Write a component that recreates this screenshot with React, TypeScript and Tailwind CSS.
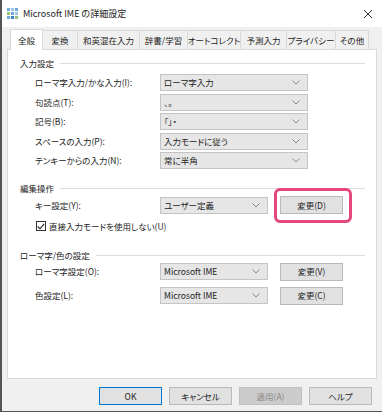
import { ReactNode } from "react";

const jp = "font-['Meiryo_UI','Noto_Sans_CJK_JP',sans-serif] [font-feature-settings:'palt']";

function Chevron() {
  return (
    <svg width="8" height="5" viewBox="0 0 8 5" className="shrink-0">
      <polyline points="0.5,0.5 4,4 7.5,0.5" fill="none" stroke="#8a8a8a" strokeWidth="1" />
    </svg>
  );
}

function Select({ value, w = "w-[148px]" }: { value: string; w?: string }) {
  return (
    <div className={`${w} h-[17px] flex items-center justify-between border border-[#c4c4c4] bg-[#e6e6e6] pl-[3px] pr-[7px] text-[8.5px] text-[#222]`}>
      <span className="whitespace-nowrap">{value}</span>
      <Chevron />
    </div>
  );
}

function Btn({ children, className = "" }: { children: ReactNode; className?: string }) {
  return (
    <div className={`w-[63px] h-[18px] flex items-center justify-center border border-[#b9b9b9] bg-[#e1e1e1] text-[8.5px] text-[#222] whitespace-nowrap ${className}`}>
      {children}
    </div>
  );
}

function Section({ title, children }: { title: string; children: ReactNode }) {
  return (
    <div className="flex flex-col">
      <div className="flex items-center h-[14px]">
        <span className="text-[8.5px] text-[#222] pr-[6px] whitespace-nowrap">{title}</span>
        <div className="flex-1 h-px bg-[#dcdcdc] mr-[11px]" />
      </div>
      {children}
    </div>
  );
}

function Row({ label, children }: { label: string; children: ReactNode }) {
  return (
    <div className="flex items-center">
      <div className="w-[140px] pl-[15px] text-[8.5px] text-[#222] whitespace-nowrap">{label}</div>
      {children}
    </div>
  );
}

const tabs = ["全般", "変換", "和英混在入力", "辞書/学習", "オートコレクト", "予測入力", "プライバシー", "その他"];
const tabW = [33, 35, 62, 48, 53, 46, 49, 33];

export default function App() {
  return (
    <div className={`w-[382px] h-[412px] overflow-hidden bg-[#f0f0f0] border-l-2 border-b border-[#555] flex flex-col ${jp}`}>
      {/* title bar */}
      <div className="h-[27px] bg-white flex items-center pl-[5px] pr-[9px] shrink-0">
        <svg width="12" height="11" viewBox="0 0 12 11">
          <rect x="0" y="0" width="3" height="3" fill="#6fa8dc" />
          <rect x="4" y="0" width="3" height="3" fill="#9fc5e8" />
          <rect x="8" y="0" width="3" height="3" fill="#6fa8dc" />
          <rect x="0" y="4" width="3" height="3" fill="#93c47d" />
          <rect x="4" y="4" width="3" height="3" fill="#6fa8dc" />
          <rect x="8" y="4" width="3" height="3" fill="#9fc5e8" />
          <rect x="0" y="8" width="3" height="3" fill="#6fa8dc" />
          <rect x="4" y="8" width="3" height="3" fill="#3d85c6" />
          <rect x="8" y="8" width="3" height="3" fill="#93c47d" />
        </svg>
        <span className="ml-[4px] text-[9px] text-[#222]">Microsoft IME の詳細設定</span>
        <svg width="10" height="10" viewBox="0 0 10 10" className="ml-auto">
          <path d="M1 1 L9 9 M9 1 L1 9" stroke="#333" strokeWidth="1" />
        </svg>
      </div>

      <div className="flex-1 flex flex-col px-[5px] pt-[2px]">
        {/* tabs */}
        <div className="flex items-end h-[20px] pl-[3px] relative z-10">
          {tabs.map((t, i) =>
            i === 0 ? (
              <div
                key={t}
                style={{ width: tabW[i] }}
                className="h-[21px] -mb-px bg-white border border-[#d9d9d9] border-b-0 flex items-center justify-center text-[8.5px] text-[#222] whitespace-nowrap"
              >
                {t}
              </div>
            ) : (
              <div
                key={t}
                style={{ width: tabW[i] }}
                className="h-[19px] bg-[#f0f0f0] border border-[#d9d9d9] border-l-0 border-b-0 flex items-center justify-center text-[8.5px] text-[#222] whitespace-nowrap"
              >
                {t}
              </div>
            )
          )}
        </div>

        {/* panel */}
        <div className="h-[330px] bg-white border border-[#d9d9d9] pl-[12px] pt-[6px] flex flex-col">
          <Section title="入力設定">
            <div className="flex flex-col gap-[2.5px] mt-[4px]">
              <Row label="ローマ字入力/かな入力(I):"><Select value="ローマ字入力" /></Row>
              <Row label="句読点(T):"><Select value="、。" /></Row>
              <Row label="記号(B):"><Select value="「」・" /></Row>
              <Row label="スペースの入力(P):"><Select value="入力モードに従う" /></Row>
              <Row label="テンキーからの入力(N):"><Select value="常に半角" /></Row>
            </div>
          </Section>

          <div className="mt-[12px]">
            <Section title="編集操作">
              <div className="mt-[1px]">
                <Row label="キー設定(Y):">
                  <Select value="ユーザー定義" w="w-[108px]" />
                  <div className="relative ml-[12px]">
                    <Btn>変更(D)</Btn>
                    <div className="absolute -left-[6px] -right-[9px] -top-[8px] -bottom-[9px] border-[3px] border-[#e4467f] rounded-[6px]" />
                  </div>
                </Row>
              </div>
              <div className="flex items-center mt-[6px] pl-[16px]">
                <div className="w-[10px] h-[10px] border border-[#333] bg-white flex items-center justify-center">
                  <svg width="8" height="7" viewBox="0 0 8 7">
                    <polyline points="0.8,3.5 3,5.8 7.2,0.8" fill="none" stroke="#222" strokeWidth="1.1" />
                  </svg>
                </div>
                <span className="ml-[3px] text-[8.5px] text-[#222]">直接入力モードを使用しない(U)</span>
              </div>
            </Section>
          </div>

          <div className="mt-[16px]">
            <Section title="ローマ字/色の設定">
              <div className="flex flex-col gap-[6px] mt-[0px]">
                <Row label="ローマ字設定(O):">
                  <Select value="Microsoft IME" w="w-[108px]" />
                  <Btn className="ml-[12px]">変更(V)</Btn>
                </Row>
                <Row label="色設定(L):">
                  <Select value="Microsoft IME" w="w-[108px]" />
                  <Btn className="ml-[12px]">変更(C)</Btn>
                </Row>
              </div>
            </Section>
          </div>
        </div>

        {/* bottom buttons */}
        <div className="flex justify-end gap-[7px] pr-[5px] mt-[8px]">
          <Btn className="!border-[#0078d7] !border-[1.5px]">OK</Btn>
          <Btn>キャンセル</Btn>
          <Btn className="!bg-[#cccccc] !border-[#bfbfbf] !text-[#8a8a8a]">適用(A)</Btn>
          <Btn>ヘルプ</Btn>
        </div>
      </div>
    </div>
  );
}
